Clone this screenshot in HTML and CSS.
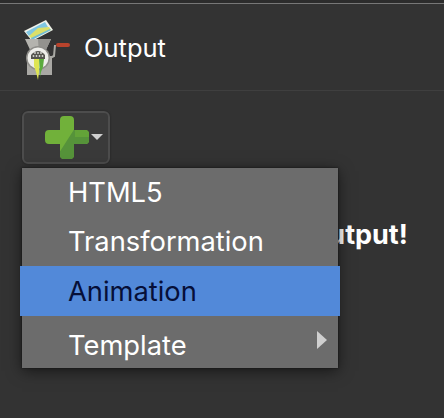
FILE: index.html
```html
<!DOCTYPE html>
<html lang="en">
<head>
<meta charset="utf-8">
<title>Output</title>
<link rel="stylesheet" href="styles.css">
</head>
<body>
<div class="topline"></div>
<header class="header">
  <svg class="logo" width="46" height="60" viewBox="0 0 46 60">
    <path d="M0 11 L22 0 L29 10 L8 21 Z" fill="#f1f2ea"/>
    <path d="M2 12 L21 2 L24 7 L5 16 Z" fill="#7fc6e2"/>
    <path d="M5 16 L14 8 L25 7 L27 10 L8 19 Z" fill="#dbe06a"/>
    <path d="M7 18 L26 9 L27 10 L8 20 Z" fill="#6fbcd8"/>
    <path d="M1 19 H27 L20 34 H8 Z" fill="#b4b3ae"/>
    <path d="M14 19 H27 L20 34 H15 Z" fill="#93928e"/>
    <rect x="3" y="36" width="25" height="19" fill="#a9a8a4"/>
    <path d="M31 25 L30 36 L24 39" stroke="#a8a8a3" stroke-width="2" fill="none"/>
    <rect x="32" y="23" width="14" height="4" rx="2" fill="#b8432c"/>
    <circle cx="14" cy="38" r="12" fill="#8f8e8a"/>
    <circle cx="14" cy="38" r="10.500" fill="#eeeeea"/>
    <path d="M7 35 Q14 27 21 35 V39 H7 Z" fill="#56554f"/>
    <g fill="#dadad5"><circle cx="11" cy="33" r=".9"/><circle cx="14" cy="33" r=".9"/><circle cx="17" cy="33" r=".9"/><circle cx="9.500" cy="36" r=".9"/><circle cx="12.500" cy="36" r=".9"/><circle cx="15.500" cy="36" r=".9"/><circle cx="18.500" cy="36" r=".9"/></g>
    <path d="M10 39 H15 V52 L14 60 L12 52 L10 46 Z" fill="#dfe552"/>
    <path d="M15 39 H20 L19 47 L17 52 L16 57 Z" fill="#5bab3e"/>
  </svg>
  <h1 class="title">Output</h1>
</header>
<main class="content">
  <button class="add-btn" type="button">
    <svg class="plus" width="46" height="46" viewBox="0 0 46 46">
      <defs>
        <clipPath id="plus-shape">
          <path d="M20 1 H26 Q30 1 30 5 V15 H41 Q45 15 45 19 V25 Q45 29 41 29 H30 V40 Q30 44 26 44 H20 Q16 44 16 40 V29 H5 Q1 29 1 25 V19 Q1 15 5 15 H16 V5 Q16 1 20 1 Z"/>
        </clipPath>
      </defs>
      <g clip-path="url(#plus-shape)">
        <rect width="46" height="46" fill="#71b13a"/>
        <rect x="30" y="14" width="16" height="16" fill="#63a338"/>
        <path d="M31 13 L15 38 V46 H31 V29 H46 V22 H31 Z" fill="#56933a"/>
      </g>
    </svg>
    <span class="caret"></span>
  </button>
  <p class="empty">Add some output!</p>
  <ul class="menu">
    <li class="item first">HTML5</li>
    <li class="item">Transformation</li>
    <li class="item active">Animation</li>
    <li class="item sub">Template<span class="arrow"></span></li>
  </ul>
</main>
</body>
</html>
```
FILE: styles.css
```css
* { box-sizing: border-box; }
html, body { margin: 0; height: 100%; }
body {
  background: #333333;
  color: #fff;
  font-family: Inter, "Liberation Sans", sans-serif;
  overflow: hidden;
}
.topline { height: 4px; border-bottom: 1px solid #777; background: #2c2c2c; }
.header {
  height: 87px;
  display: flex;
  align-items: center;
  gap: 14px;
  padding: 0 0 0 24px;
  border-bottom: 1px solid #3f3f3f;
}
.logo { flex: none; margin-top: 5px; }
.title { margin: 0; font-size: 25.500px; font-weight: 400; }
.content { position: relative; padding: 20px 22px; }
.add-btn {
  display: flex;
  align-items: center;
  width: 88px;
  height: 53px;
  padding: 0 0 0 20px;
  background: #3a3a3a;
  border: 2px solid #4d4d4d;
  border-radius: 6px;
  box-shadow: 0 0 2px #1f1f1f;
}
.plus { flex: none; }
.caret {
  margin-left: 1px;
  margin-top: -2px;
  border-left: 6px solid transparent;
  border-right: 6px solid transparent;
  border-top: 6px solid #cfcfcf;
}
.empty {
  margin: 54px 0 0;
  padding-left: 151px;
  font-size: 27px;
  font-weight: 700;
  white-space: nowrap;
}
.menu {
  position: absolute;
  top: 77px;
  left: 22px;
  width: 316px;
  margin: 0;
  padding: 0;
  list-style: none;
  background: #6c6c6c;
  box-shadow: 0 0 2px #111, 0 3px 14px rgba(0, 0, 0, .55);
}
.item {
  height: 50px;
  display: flex;
  align-items: center;
  justify-content: space-between;
  padding: 0 11px 0 46px;
  font-size: 27.300px;
}
.first { height: 48px; }
.active {
  margin: 0 -2px;
  padding-left: 48px;
  background: #5289d9;
  color: #060f38;
}
.sub { height: 52px; padding-top: 6px; }
.arrow {
  margin-top: -10px;
  border-top: 9px solid transparent;
  border-bottom: 9px solid transparent;
  border-left: 10px solid #cfcfcf;
}
```
